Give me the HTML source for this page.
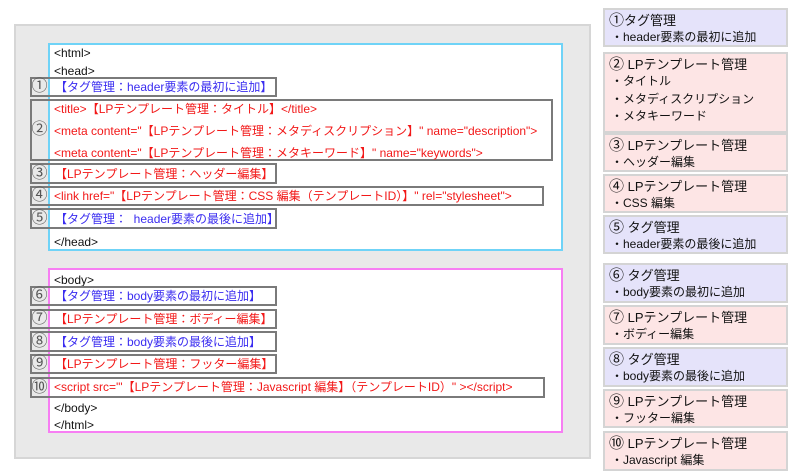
<!DOCTYPE html>
<html><head><meta charset="utf-8"><style>
*{margin:0;padding:0;box-sizing:border-box}
body{width:800px;height:475px;background:#fff;position:relative;overflow:hidden;font-family:"Liberation Sans","Noto Sans CJK JP",sans-serif;font-size:12px;color:#111}
.a{position:absolute}
.gray{left:14px;top:24px;width:577px;height:435px;background:#e9e9e9;border:2px solid #d6d6d6}
.blue{left:48px;top:43px;width:515px;height:208px;background:#fff;border:2px solid #6fd3f7}
.pink{left:48px;top:268px;width:515px;height:165px;background:#fff;border:2px solid #f77ef3}
.box{border:2px solid #7a7a7a}
.num{position:absolute;left:30px;width:19px;text-align:center;color:#555;font-size:16px;line-height:16px}
.t{position:absolute;white-space:nowrap;line-height:14px}
.bl{color:#3a2cf0}.rd{color:#f21818}
.r{position:absolute;left:603px;width:185px;border:2px solid #d4d4d4;color:#111;padding-left:4px}
.r .h{font-size:13px;line-height:17px;margin-top:2px}
.r .i{font-size:12px;line-height:17.5px;padding-left:2px}
.r .n{font-size:15px}
.lv{background:#e5e3fa}.pk{background:#fde5e5}
</style></head><body>
<div class="a gray"></div>
<div class="a blue"></div>
<div class="a pink"></div>

<div class="t" style="left:54px;top:46px">&lt;html&gt;</div>
<div class="t" style="left:54px;top:64px">&lt;head&gt;</div>

<div class="a box" style="left:30px;top:77px;width:247px;height:20px"></div>
<div class="num" style="top:79px">①</div>
<div class="t bl" style="left:55px;top:80px">【タグ管理：header要素の最初に追加】</div>

<div class="a box" style="left:30px;top:99px;width:523px;height:62px"></div>
<div class="num" style="top:122px">②</div>
<div class="t rd" style="left:54px;top:102px">&lt;title&gt;【LPテンプレート管理：タイトル】&lt;/title&gt;</div>
<div class="t rd" style="left:54px;top:124px">&lt;meta content="【LPテンプレート管理：メタディスクリプション】" name="description"&gt;</div>
<div class="t rd" style="left:54px;top:146px">&lt;meta content="【LPテンプレート管理：メタキーワード】" name="keywords"&gt;</div>

<div class="a box" style="left:30px;top:163px;width:247px;height:21px"></div>
<div class="num" style="top:166px">③</div>
<div class="t rd" style="left:55px;top:167px">【LPテンプレート管理：ヘッダー編集】</div>

<div class="a box" style="left:30px;top:186px;width:514px;height:20px"></div>
<div class="num" style="top:188px">④</div>
<div class="t rd" style="left:54px;top:189px">&lt;link href="【LPテンプレート管理：CSS 編集（テンプレートID）】" rel="stylesheet"&gt;</div>

<div class="a box" style="left:30px;top:208px;width:247px;height:21px"></div>
<div class="num" style="top:211px">⑤</div>
<div class="t bl" style="left:55px;top:212px">【タグ管理：&nbsp; header要素の最後に追加】</div>

<div class="t" style="left:54px;top:235px">&lt;/head&gt;</div>

<div class="t" style="left:54px;top:273px">&lt;body&gt;</div>

<div class="a box" style="left:30px;top:286px;width:247px;height:20px"></div>
<div class="num" style="top:288px">⑥</div>
<div class="t bl" style="left:55px;top:289px">【タグ管理：body要素の最初に追加】</div>

<div class="a box" style="left:30px;top:309px;width:247px;height:20px"></div>
<div class="num" style="top:311px">⑦</div>
<div class="t rd" style="left:55px;top:312px">【LPテンプレート管理：ボディー編集】</div>

<div class="a box" style="left:30px;top:331px;width:247px;height:21px"></div>
<div class="num" style="top:334px">⑧</div>
<div class="t bl" style="left:55px;top:335px">【タグ管理：body要素の最後に追加】</div>

<div class="a box" style="left:30px;top:354px;width:247px;height:20px"></div>
<div class="num" style="top:356px">⑨</div>
<div class="t rd" style="left:55px;top:357px">【LPテンプレート管理：フッター編集】</div>

<div class="a box" style="left:30px;top:377px;width:515px;height:21px"></div>
<div class="num" style="top:380px">⑩</div>
<div class="t rd" style="left:54px;top:380px">&lt;script src='"【LPテンプレート管理：Javascript 編集】（テンプレートID）" &gt;&lt;/script&gt;</div>

<div class="t" style="left:54px;top:401px">&lt;/body&gt;</div>
<div class="t" style="left:54px;top:418px">&lt;/html&gt;</div>

<div class="r lv" style="top:8px;height:39px"><div class="h"><span class="n">①</span>タグ管理</div><div class="i">・header要素の最初に追加</div></div>
<div class="r pk" style="top:52px;height:81px"><div class="h"><span class="n">②</span> LPテンプレート管理</div><div class="i">・タイトル</div><div class="i">・メタディスクリプション</div><div class="i">・メタキーワード</div></div>
<div class="r pk" style="top:133px;height:39px"><div class="h"><span class="n">③</span> LPテンプレート管理</div><div class="i">・ヘッダー編集</div></div>
<div class="r pk" style="top:174px;height:39px"><div class="h"><span class="n">④</span> LPテンプレート管理</div><div class="i">・CSS 編集</div></div>
<div class="r lv" style="top:215px;height:39px"><div class="h"><span class="n">⑤</span> タグ管理</div><div class="i">・header要素の最後に追加</div></div>
<div class="r lv" style="top:263px;height:40px"><div class="h"><span class="n">⑥</span> タグ管理</div><div class="i">・body要素の最初に追加</div></div>
<div class="r pk" style="top:305px;height:40px"><div class="h"><span class="n">⑦</span> LPテンプレート管理</div><div class="i">・ボディー編集</div></div>
<div class="r lv" style="top:347px;height:40px"><div class="h"><span class="n">⑧</span> タグ管理</div><div class="i">・body要素の最後に追加</div></div>
<div class="r pk" style="top:389px;height:39px"><div class="h"><span class="n">⑨</span> LPテンプレート管理</div><div class="i">・フッター編集</div></div>
<div class="r pk" style="top:431px;height:40px"><div class="h"><span class="n">⑩</span> LPテンプレート管理</div><div class="i">・Javascript 編集</div></div>
</body></html>
